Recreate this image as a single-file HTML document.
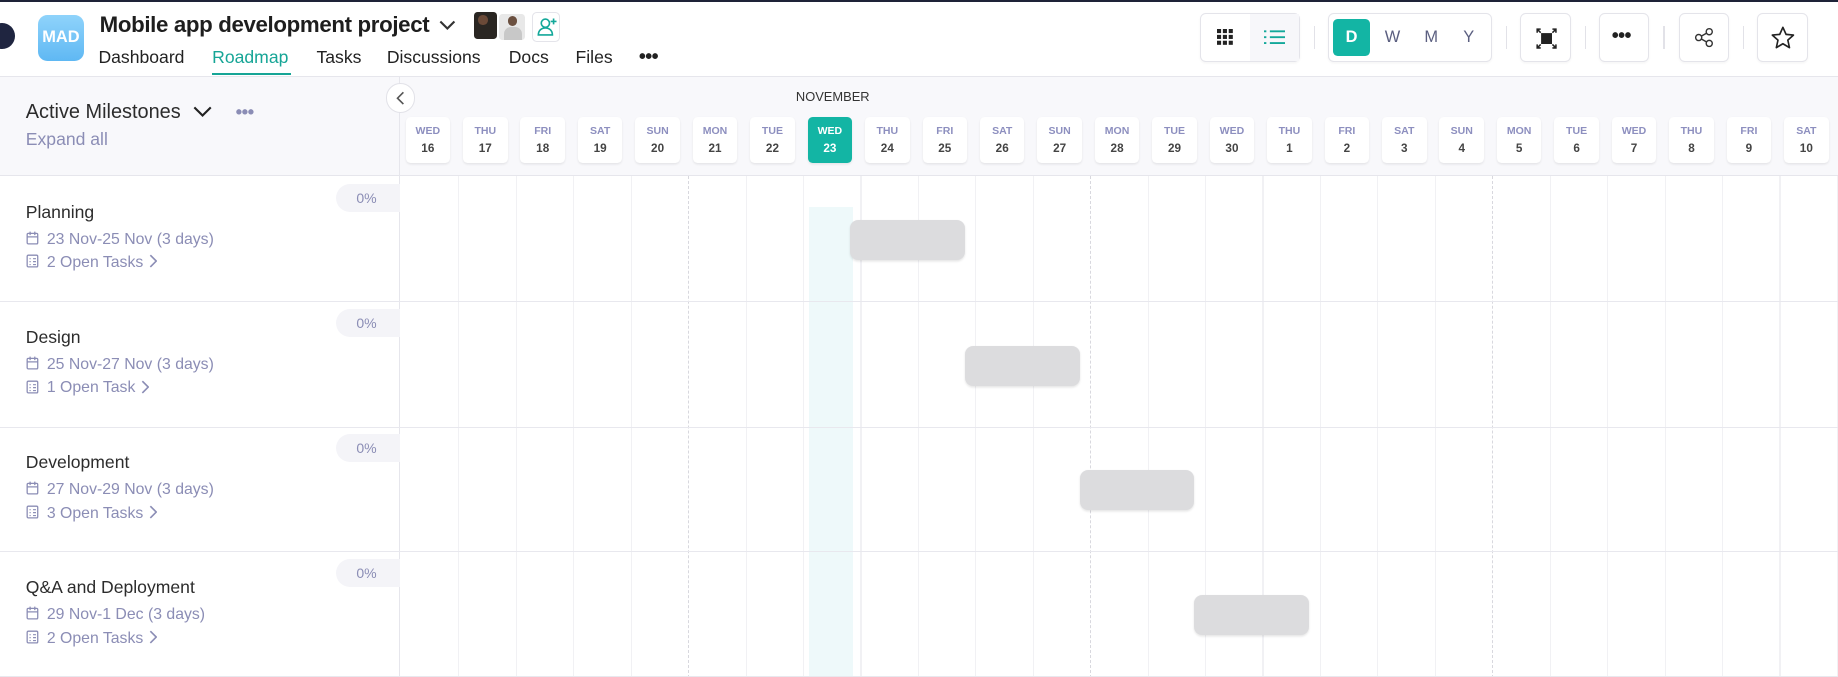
<!DOCTYPE html>
<html><head><meta charset="utf-8"><style>
*{box-sizing:border-box;margin:0;padding:0}
html,body{width:1838px;height:677px;overflow:hidden;background:#fff}
#w{zoom:1.17219;width:1568px;height:578px;position:relative;font-family:"Liberation Sans",sans-serif;color:#2a2a2a;overflow:hidden}
.a{position:absolute}
.nav{position:absolute;top:40px;font-size:15px;color:#222}
.tb{position:absolute;top:11px;height:42px;border:1px solid #e4e4ea;border-radius:5px;background:#fff;box-shadow:0 1px 2px rgba(0,0,0,.04)}
.sep{position:absolute;top:22px;width:1px;height:20px;background:#e2e2e8}
.card{position:absolute;top:100px;width:38px;height:39px;background:#fff;border-radius:4px;box-shadow:0 1px 2px rgba(0,0,0,.08);text-align:center;font-weight:bold}
.card .d{font-size:9px;color:#8d8fbf;margin-top:7px}
.card .n{font-size:10px;color:#444;margin-top:4px}
.card.t{background:#13b5a4}.card.t .d,.card.t .n{color:#fff}
.vl{position:absolute;top:150px;height:428px;width:1px;background:#f1f1f4}
.dl{position:absolute;top:150px;height:428px;width:0;border-left:1.5px dashed #d8d8de}
.hl{position:absolute;left:0;width:1568px;height:1px;background:#e8e8ee}
.row .t{position:absolute;left:22px;font-size:15px;color:#2c2c2c}
.row .s{position:absolute;left:22px;font-size:13.5px;color:#8b8db5}
.pct{position:absolute;left:287px;width:54px;height:24px;background:#f4f4f8;border-radius:12px 0 0 12px;font-size:12px;color:#8b8db5;padding:5px 0 0 17px}
.bar{position:absolute;width:98px;height:34px;background:#dcdcde;border-radius:7px;box-shadow:0 1px 2px rgba(0,0,0,.1)}
.dots{position:absolute;font-weight:bold;letter-spacing:-0.5px}
</style></head><body><div id="w">
<div class="a" style="left:0;top:0;width:1568px;height:2px;background:#1e2338"></div>
<div class="a" style="left:-9px;top:20px;width:22px;height:22px;border-radius:50%;background:#1f2540"></div>
<div class="a" style="left:32px;top:13px;width:40px;height:39px;border-radius:8px;background:linear-gradient(#8fd3fb,#5fb8f3);color:#fff;font-weight:bold;font-size:14px;text-align:center;line-height:39px">MAD</div>
<div class="a" style="left:85px;top:10px;font-size:19px;font-weight:bold;color:#1e1e1e;letter-spacing:-.3px">Mobile app development project</div>
<svg class="a" style="left:374px;top:15px" width="16" height="12"><path d="M2 3l6 6 6-6" fill="none" stroke="#333" stroke-width="1.8"/></svg>
<div class="a" style="left:404px;top:10px;width:20px;height:23px;background:#2a2622;border-radius:3px"></div>
<div class="a" style="left:408px;top:13px;width:8px;height:8px;background:#6b4a38;border-radius:50%"></div>
<div class="a" style="left:426px;top:12px;width:22px;height:22px;background:#e8e8e8;border-radius:3px"></div>
<div class="a" style="left:433px;top:14px;width:8px;height:8px;background:#6b5040;border-radius:50%"></div>
<div class="a" style="left:430px;top:23px;width:15px;height:11px;background:#c8c8c8;border-radius:6px 6px 0 0"></div>
<div class="a" style="left:454px;top:10px;width:24px;height:26px;border:1px solid #e4e4ea;border-radius:4px"></div>
<svg class="a" style="left:457px;top:13px" width="20" height="20"><circle cx="8" cy="7" r="3.5" fill="none" stroke="#13a89a" stroke-width="1.4"/><path d="M2 17c0-4 3-6 6-6s6 2 6 6z" fill="none" stroke="#13a89a" stroke-width="1.4"/><path d="M15 3v5M12.5 5.5h5" stroke="#13a89a" stroke-width="1.4"/></svg>
<div class="nav" style="left:84px">Dashboard</div>
<div class="nav" style="left:181px;color:#16a596">Roadmap</div>
<div class="a" style="left:181px;top:62px;width:67px;height:2px;background:#16a596"></div>
<div class="nav" style="left:270px">Tasks</div>
<div class="nav" style="left:330px">Discussions</div>
<div class="nav" style="left:434px">Docs</div>
<div class="nav" style="left:491px">Files</div>
<div class="dots" style="left:545px;top:39px;font-size:17px;color:#222">•••</div>
<div class="tb" style="left:1024px;width:85px"></div>
<div class="a" style="left:1066px;top:12px;width:42px;height:40px;background:#f7f7fa"></div>
<svg class="a" style="left:1038px;top:25px" width="14" height="14" fill="#222"><rect x="0" y="0" width="3.5" height="3.5"/><rect x="5" y="0" width="3.5" height="3.5"/><rect x="10" y="0" width="3.5" height="3.5"/><rect x="0" y="5" width="3.5" height="3.5"/><rect x="5" y="5" width="3.5" height="3.5"/><rect x="10" y="5" width="3.5" height="3.5"/><rect x="0" y="10" width="3.5" height="3.5"/><rect x="5" y="10" width="3.5" height="3.5"/><rect x="10" y="10" width="3.5" height="3.5"/></svg>
<svg class="a" style="left:1078px;top:25px" width="18" height="14" stroke="#13a89a" stroke-width="1.6"><path d="M0 2h2M5 2h13M0 7h2M5 7h13M0 12h2M5 12h13"/></svg>
<div class="sep" style="left:1121px"></div>
<div class="tb" style="left:1133px;width:140px"></div>
<div class="a" style="left:1137px;top:16px;width:32px;height:32px;background:#13b5a4;border-radius:4px;color:#fff;font-weight:bold;font-size:14px;text-align:center;line-height:32px">D</div>
<div class="a" style="left:1177px;top:16px;width:22px;font-size:14px;color:#5b5f80;line-height:32px;text-align:center">W</div>
<div class="a" style="left:1210px;top:16px;width:22px;font-size:14px;color:#5b5f80;line-height:32px;text-align:center">M</div>
<div class="a" style="left:1242px;top:16px;width:22px;font-size:14px;color:#5b5f80;line-height:32px;text-align:center">Y</div>
<div class="sep" style="left:1285px"></div>
<div class="tb" style="left:1297px;width:43px"></div>
<svg class="a" style="left:1310px;top:24px" width="18" height="18" stroke="#222" stroke-width="1.3" fill="none"><rect x="5" y="5" width="8" height="8" fill="#222"/><path d="M1 4V1h3M1 1l3 3M14 1h3v3M17 1l-3 3M1 14v3h3M1 17l3-3M17 14v3h-3M17 17l-3-3"/></svg>
<div class="sep" style="left:1352px"></div>
<div class="tb" style="left:1364px;width:43px"></div>
<div class="dots" style="left:1375px;top:21px;font-size:17px;color:#222">•••</div>
<div class="sep" style="left:1419px"></div>
<div class="tb" style="left:1432px;width:43px"></div>
<svg class="a" style="left:1445px;top:23px" width="18" height="18" fill="none" stroke="#333" stroke-width="1.2"><circle cx="13" cy="4" r="2.6"/><circle cx="4" cy="9" r="2.6"/><circle cx="13" cy="14" r="2.6"/><path d="M6.3 7.8l4.5-2.6M6.3 10.2l4.5 2.6"/></svg>
<div class="sep" style="left:1487px"></div>
<div class="tb" style="left:1499px;width:43px"></div>
<svg class="a" style="left:1510px;top:21px" width="22" height="22"><path d="M11 2l2.7 6 6.3.6-4.8 4.3 1.4 6.4L11 16l-5.6 3.3 1.4-6.4L2 8.6 8.3 8z" fill="none" stroke="#222" stroke-width="1.4" stroke-linejoin="round"/></svg>
<div class="a" style="left:0;top:65px;width:1568px;height:85px;background:#f8f8fb;border-top:1px solid #e6e6ec;border-bottom:1px solid #e6e6ec"></div>
<div class="a" style="left:340px;top:65px;width:1px;height:513px;background:#e6e6ec"></div>
<div class="a" style="left:22px;top:86px;font-size:17px;color:#2c2c2c">Active Milestones</div>
<svg class="a" style="left:164px;top:90px" width="18" height="12"><path d="M2 2l7 7 7-7" fill="none" stroke="#222" stroke-width="1.8"/></svg>
<div class="dots" style="left:201px;top:86px;font-size:16px;color:#8b8db5">•••</div>
<div class="a" style="left:22px;top:110px;font-size:15px;color:#8b8db5">Expand all</div>
<div class="a" style="left:329px;top:71px;width:25px;height:25px;border-radius:50%;background:#fff;border:1px solid #e2e2e8"></div>
<svg class="a" style="left:336px;top:77px" width="12" height="14"><path d="M8 2L3 7l5 5" fill="none" stroke="#555" stroke-width="1.4"/></svg>
<div class="a" style="left:679px;top:76px;font-size:11px;color:#333">NOVEMBER</div>
<div id="cards"></div>
<div class="a" style="left:690px;top:177px;width:38px;height:401px;background:#eef9fa"></div>
<div id="grid"></div>
<div class="hl" style="top:257px"></div><div class="hl" style="top:364px"></div><div class="hl" style="top:470px"></div><div class="hl" style="top:577px"></div>
<div class="bar" style="left:725px;top:188px"></div>
<div class="bar" style="left:823px;top:295px"></div>
<div class="bar" style="left:921px;top:401px"></div>
<div class="bar" style="left:1019px;top:508px"></div>
<div id="rows"></div>
</div>
<script>
var D=[["WED",16],["THU",17],["FRI",18],["SAT",19],["SUN",20],["MON",21],["TUE",22],["WED",23],["THU",24],["FRI",25],["SAT",26],["SUN",27],["MON",28],["TUE",29],["WED",30],["THU",1],["FRI",2],["SAT",3],["SUN",4],["MON",5],["TUE",6],["WED",7],["THU",8],["FRI",9],["SAT",10]];
var h="";D.forEach(function(d,i){h+='<div class="card'+(i==7?' t':'')+'" style="left:'+(346+49*i)+'px"><div class="d">'+d[0]+'</div><div class="n">'+d[1]+'</div></div>'});
document.getElementById("cards").outerHTML=h;
var g="";for(var i=0;i<25;i++){var x=391+49*i;if(x>1568)break;g+=(i%7==4?'<div class="dl" style="left:'+x+'px"></div>':'<div class="vl" style="left:'+x+'px"></div>')}
document.getElementById("grid").outerHTML=g;
var R=[["Planning","23 Nov-25 Nov (3 days)","2 Open Tasks"],["Design","25 Nov-27 Nov (3 days)","1 Open Task"],["Development","27 Nov-29 Nov (3 days)","3 Open Tasks"],["Q&amp;A and Deployment","29 Nov-1 Dec (3 days)","2 Open Tasks"]];
var cal='<svg width="11" height="12" style="vertical-align:-1px;margin-right:7px"><rect x="1" y="2" width="9" height="9" rx="1" fill="none" stroke="#8b8db5" stroke-width="1.1"/><path d="M1 5h9M3.5 0.5v3M7.5 0.5v3" stroke="#8b8db5" stroke-width="1.1"/></svg>';
var tk='<svg width="11" height="12" style="vertical-align:-1px;margin-right:7px"><rect x="1" y="1" width="9" height="10" rx="1" fill="none" stroke="#8b8db5" stroke-width="1.1"/><path d="M3 4h1M6 4h2.5M3 6.5h1M6 6.5h2.5M3 9h1M6 9h2.5" stroke="#8b8db5" stroke-width="1"/></svg>';
var r="";R.forEach(function(x,i){var y=150+i*106.7;r+='<div class="row"><div class="pct" style="top:'+(y+7)+'px">0%</div><div class="t" style="top:'+(y+22)+'px">'+x[0]+'</div><div class="s" style="top:'+(y+47)+'px">'+cal+x[1]+'</div><div class="s" style="top:'+(y+67)+'px">'+tk+x[2]+' <svg width="8" height="12" style="vertical-align:-1px"><path d="M2 1l5 5-5 5" fill="none" stroke="#8b8db5" stroke-width="1.4"/></svg></div></div>'});
document.getElementById("rows").outerHTML=r;
</script>
</body></html>
